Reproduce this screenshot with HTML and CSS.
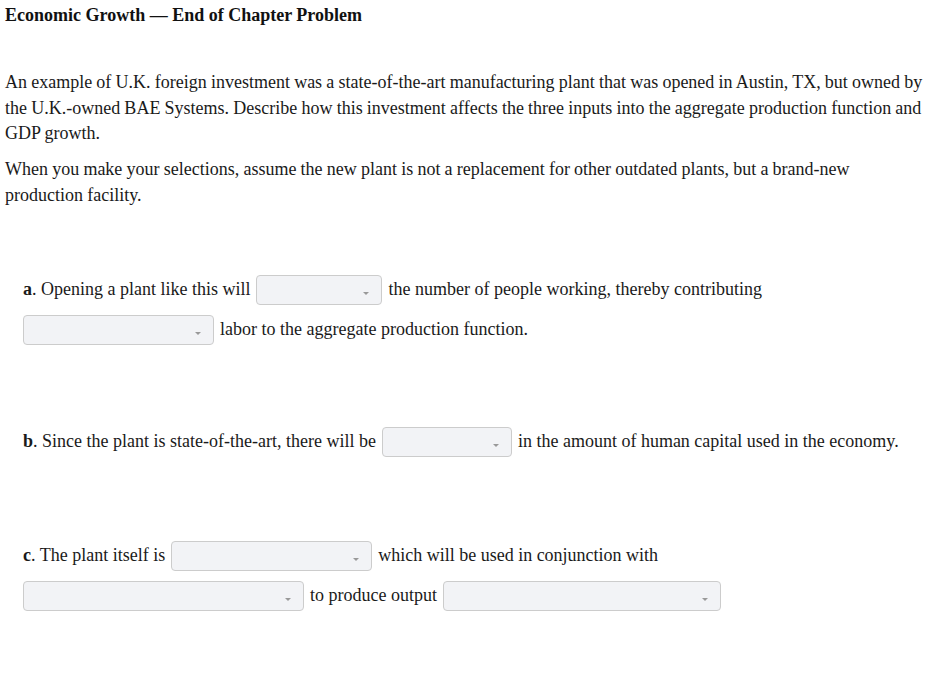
FILE: index.html
```html
<!DOCTYPE html>
<html>
<head>
<meta charset="utf-8">
<link rel="stylesheet" href="styles.css">
</head>
<body>
<div class="page">
  <h1 class="title">Economic Growth — End of Chapter Problem</h1>
  <div class="intro">
    <p>An example of U.K. foreign investment was a state-of-the-art manufacturing plant that was opened in Austin, TX, but owned by the U.K.-owned BAE Systems. Describe how this investment affects the three inputs into the aggregate production function and GDP growth.</p>
    <p>When you make your selections, assume the new plant is not a replacement for other outdated plants, but a brand-new production facility.</p>
  </div>
  <div class="question q-a">
    <div class="row">
      <span><b>a</b>. Opening a plant like this will</span>
      <span class="select w128"><span class="caret"></span></span>
      <span>the number of people working, thereby contributing</span>
    </div>
    <div class="row">
      <span class="select w191"><span class="caret"></span></span>
      <span>labor to the aggregate production function.</span>
    </div>
  </div>
  <div class="question q-b">
    <div class="row">
      <span><b>b</b>. Since the plant is state-of-the-art, there will be</span>
      <span class="select w130"><span class="caret"></span></span>
      <span>in the amount of human capital used in the economy.</span>
    </div>
  </div>
  <div class="question q-c">
    <div class="row">
      <span><b>c</b>. The plant itself is</span>
      <span class="select w202"><span class="caret"></span></span>
      <span>which will be used in conjunction with</span>
    </div>
    <div class="row">
      <span class="select w281"><span class="caret"></span></span>
      <span>to produce output</span>
      <span class="select w278"><span class="caret"></span></span>
    </div>
  </div>
</div>
</body>
</html>
```

FILE: styles.css
```css
html, body {
  margin: 0;
  padding: 0;
  background: #fff;
}
body {
  font-family: "Liberation Serif", "Times New Roman", serif;
  font-size: 18px;
  color: #1a1a1a;
}
.page {
  padding: 4px 0 0 5px;
}
.title {
  font-size: 18px;
  font-weight: bold;
  margin: 0;
  line-height: 22px;
  color: #111;
}
.intro {
  margin-top: 44px;
  margin-right: -6px;
  word-spacing: -0.3px;
}
.intro p {
  margin: 0 0 10px 0;
  line-height: 25.7px;
}
.question {
  padding-left: 18px;
}
.q-a { margin-top: 66px; }
.q-b { margin-top: 82px; }
.q-c { margin-top: 84px; }
.row {
  display: flex;
  align-items: center;
  gap: 6px;
  height: 30px;
  margin-bottom: 10px;
}
.row b { font-weight: bold; }
.select {
  position: relative;
  display: inline-block;
  flex: none;
  height: 28px;
  background: #f2f3f6;
  border: 1px solid #ccc;
  border-radius: 4px;
  box-sizing: content-box;
}
.caret {
  position: absolute;
  right: 12px;
  bottom: 9px;
  width: 0;
  height: 0;
  border-left: 3px solid transparent;
  border-right: 3px solid transparent;
  border-top: 3px solid #999;
}
.w128 { width: 124px; }
.w191 { width: 189px; }
.w130 { width: 128px; }
.w202 { width: 199px; }
.w281 { width: 279px; }
.w278 { width: 276px; }
```
